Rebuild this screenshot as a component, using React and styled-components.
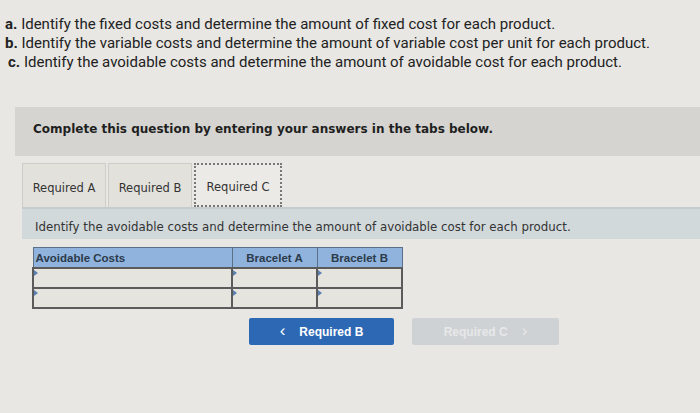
import React from 'react';
import styled, { createGlobalStyle } from 'styled-components';

const GlobalStyle = createGlobalStyle`
  html, body {
    margin: 0;
    padding: 0;
    background: #e8e7e3;
  }
  body {
    width: 700px;
    height: 413px;
    overflow: hidden;
  }
`;

const parts = [
  ['a.', 'Identify the fixed costs and determine the amount of fixed cost for each product.'],
  ['b.', 'Identify the variable costs and determine the amount of variable cost per unit for each product.'],
  ['c.', 'Identify the avoidable costs and determine the amount of avoidable cost for each product.'],
];

const App = () => {
  return (
    <Page>
      <GlobalStyle />
      <Questions>
        {parts.map(([label, text], i) => (
          <QuestionLine key={label} indent={i === 2 ? 3 : 0}>
            <strong>{label}</strong> {text}
          </QuestionLine>
        ))}
      </Questions>

      <Banner>Complete this question by entering your answers in the tabs below.</Banner>

      <Tabs>
        <Tab>Required A</Tab>
        <Tab>Required B</Tab>
        <Tab active>Required C</Tab>
      </Tabs>

      <Instruction>
        Identify the avoidable costs and determine the amount of avoidable cost for each product.
      </Instruction>

      <CostTable>
        <thead>
          <tr>
            <HeadCell align="left">Avoidable Costs</HeadCell>
            <HeadCell>Bracelet A</HeadCell>
            <HeadCell>Bracelet B</HeadCell>
          </tr>
        </thead>
        <tbody>
          {[0, 1].map((row) => (
            <tr key={row}>
              <InputCell />
              <InputCell />
              <InputCell />
            </tr>
          ))}
        </tbody>
      </CostTable>

      <NavRow>
        <NavButton>
          <Chevron>&lsaquo;</Chevron>
          Required B
        </NavButton>
        <NavButton disabled>
          Required C
          <Chevron>&rsaquo;</Chevron>
        </NavButton>
      </NavRow>
    </Page>
  );
};

export default App;

const Page = styled.div`
  width: 700px;
  height: 413px;
  background: #e8e7e3;
  padding-top: 15px;
  box-sizing: border-box;
`;

const Questions = styled.div`
  padding-left: 5px;
  font-family: Roboto, 'Liberation Sans', sans-serif;
  font-size: 15px;
  color: #222;
`;

const QuestionLine = styled.div`
  line-height: 19px;
  padding-left: ${({ indent }) => indent}px;

  strong {
    font-weight: 700;
  }
`;

const Banner = styled.div`
  margin: 35px 0 0 15px;
  height: 49px;
  padding: 15px 0 0 18px;
  box-sizing: border-box;
  background: #d5d4d0;
  font-family: 'DejaVu Sans', Verdana, sans-serif;
  font-weight: 700;
  font-size: 12px;
  color: #1f1f1f;
`;

const Tabs = styled.div`
  display: flex;
  gap: 2px;
  margin: 7px 0 0 22px;
  height: 44px;
`;

const Tab = styled.div`
  display: flex;
  align-items: center;
  justify-content: center;
  width: ${({ active }) => (active ? '88px' : '84px')};
  box-sizing: border-box;
  font-family: 'DejaVu Sans', Verdana, sans-serif;
  font-size: 11.5px;
  color: #333;
  background: ${({ active }) => (active ? '#ebeae6' : '#e2e1dc')};
  border: ${({ active }) => (active ? '2px dotted #777' : '1px solid #cfcdc8')};
  border-bottom: ${({ active }) => (active ? '2px dotted #777' : 'none')};
  padding-top: 4px;
`;

const Instruction = styled.div`
  margin-left: 22px;
  height: 32px;
  padding: 11px 0 0 13px;
  box-sizing: border-box;
  background: #d2d9db;
  border-top: 2px solid #c5ccce;
  font-family: 'DejaVu Sans', Verdana, sans-serif;
  font-size: 11.8px;
  color: #333;
`;

const CostTable = styled.table`
  margin: 8px 0 0 32px;
  width: 371px;
  border-collapse: collapse;
  font-family: 'Liberation Sans', Arial, sans-serif;
`;

const HeadCell = styled.th`
  height: 19px;
  padding: 0 2px;
  background: #8fb3dc;
  border: 1px solid #5a6f88;
  font-size: 11.5px;
  font-weight: 700;
  color: #2c3a4a;
  text-align: ${({ align }) => align || 'center'};

  &:first-child {
    width: 194px;
  }
  &:nth-child(2) {
    width: 80px;
  }
`;

const InputCell = styled.td`
  position: relative;
  height: 18px;
  padding: 0;
  background: #e6e4df;
  border: 2px solid #5b5b5b;

  &::before {
    content: '';
    position: absolute;
    top: 1px;
    left: 0;
    border-left: 4px solid #5a7fb0;
    border-top: 3px solid transparent;
    border-bottom: 3px solid transparent;
  }
`;

const NavRow = styled.div`
  display: flex;
  gap: 18px;
  margin: 9px 0 0 249px;
`;

const NavButton = styled.div`
  display: flex;
  align-items: center;
  justify-content: center;
  gap: 14px;
  width: ${({ disabled }) => (disabled ? '147px' : '145px')};
  height: 27px;
  border-radius: 2px;
  font-family: 'Liberation Sans', Arial, sans-serif;
  font-size: 12px;
  font-weight: 700;
  background: ${({ disabled }) => (disabled ? '#cfd2d4' : '#2d68b4')};
  color: ${({ disabled }) => (disabled ? '#e6e8ea' : '#ffffff')};
`;

const Chevron = styled.span`
  font-size: 17px;
  font-weight: 400;
  line-height: 1;
  margin-top: -2px;
`;
